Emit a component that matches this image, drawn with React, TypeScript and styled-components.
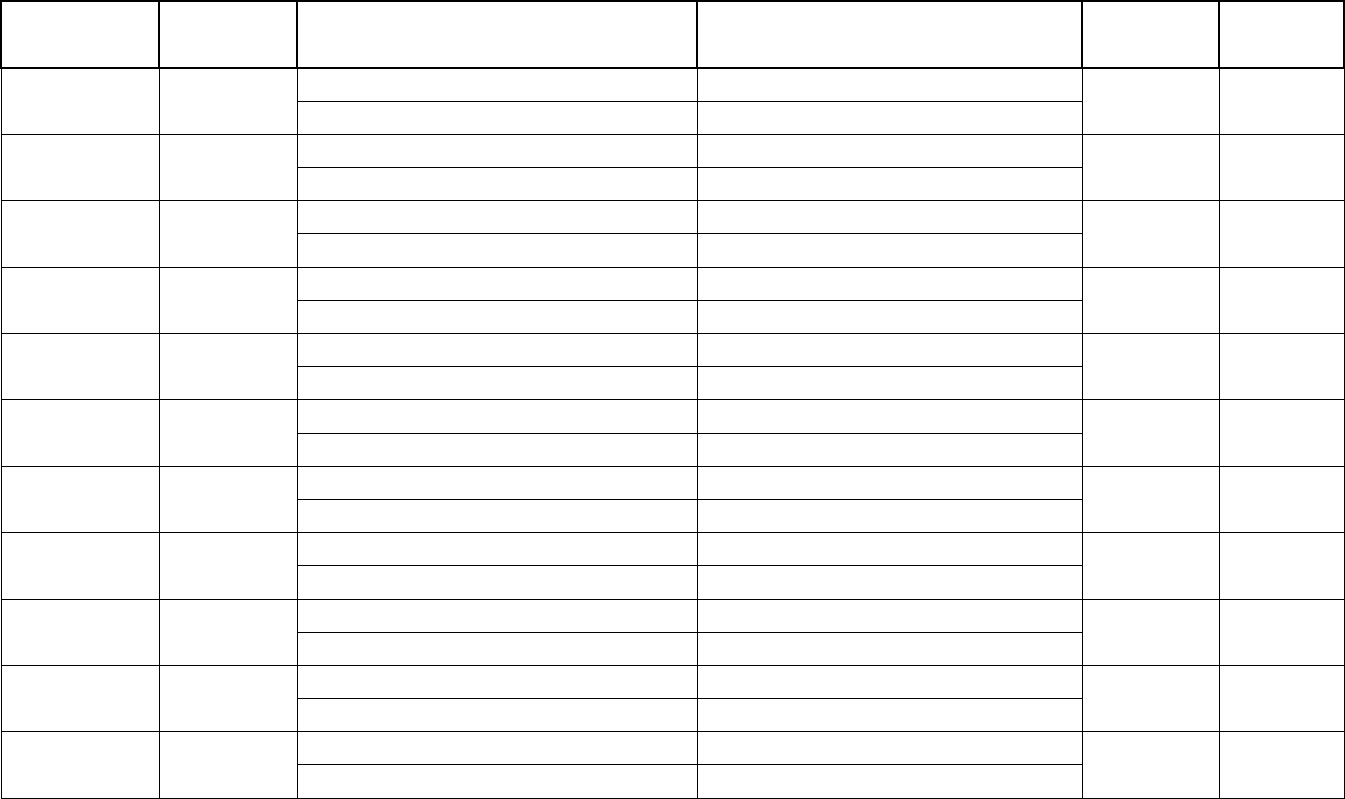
import React from "react";
import styled, { createGlobalStyle } from "styled-components";

const GlobalStyle = createGlobalStyle`
  html, body {
    margin: 0;
    padding: 0;
    background: #fff;
    font-family: "Liberation Sans", Arial, sans-serif;
  }
`;

const columns = [158, 138, 400, 385, 137, 125];
const groups = Array.from({ length: 11 }, (_, i) => i);

const Sheet = styled.table`
  width: 100%;
  border-collapse: collapse;
  table-layout: fixed;
  color: #000;
  font-size: 14px;
`;

const HeadRow = styled.tr`
  height: 67px;
`;

const HeadCell = styled.th`
  border: 2px solid #000;
  padding: 0;
  font-weight: bold;
`;

const BodyRow = styled.tr`
  height: 33.2px;
`;

const Cell = styled.td`
  border: 1px solid #000;
  padding: 0;
`;

export default function App() {
  return (
    <>
      <GlobalStyle />
      <Sheet>
        <colgroup>
          {columns.map((w, i) => (
            <col key={i} style={{ width: w }} />
          ))}
        </colgroup>
        <thead>
          <HeadRow>
            {columns.map((_, i) => (
              <HeadCell key={i} />
            ))}
          </HeadRow>
        </thead>
        <tbody>
          {groups.map((g) => (
            <React.Fragment key={g}>
              <BodyRow>
                <Cell rowSpan={2} />
                <Cell rowSpan={2} />
                <Cell />
                <Cell />
                <Cell rowSpan={2} />
                <Cell rowSpan={2} />
              </BodyRow>
              <BodyRow>
                <Cell />
                <Cell />
              </BodyRow>
            </React.Fragment>
          ))}
        </tbody>
      </Sheet>
    </>
  );
}
